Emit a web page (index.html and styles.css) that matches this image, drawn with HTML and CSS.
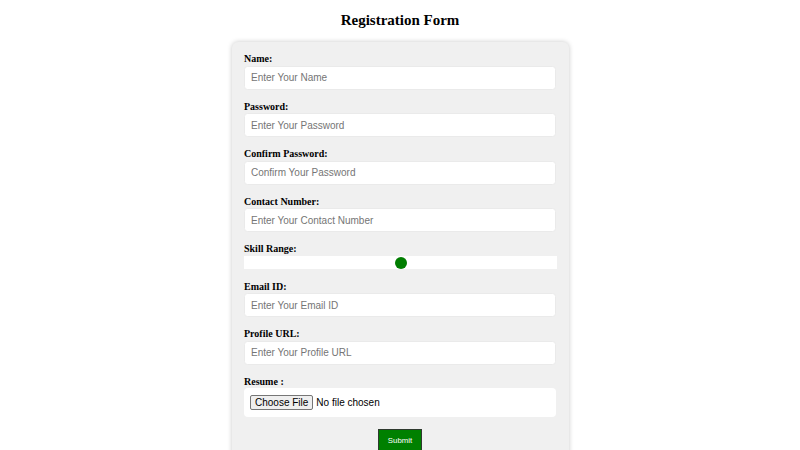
FILE: index.html
```html
<!DOCTYPE html>
<html lang="en">
<head>
<meta charset="utf-8">
<title>Registration Form</title>
<link rel="stylesheet" href="styles.css">
</head>
<body>
<h1 class="title">Registration Form</h1>
<form class="card">
  <label class="lbl" for="name">Name:</label>
  <input class="field" id="name" type="text" placeholder="Enter Your Name">
  <label class="lbl" for="pw">Password:</label>
  <input class="field" id="pw" type="password" placeholder="Enter Your Password">
  <label class="lbl" for="cpw">Confirm Password:</label>
  <input class="field" id="cpw" type="password" placeholder="Confirm Your Password">
  <label class="lbl" for="phone">Contact Number:</label>
  <input class="field" id="phone" type="tel" placeholder="Enter Your Contact Number">
  <label class="lbl" for="skill">Skill Range:</label>
  <input class="range" id="skill" type="range" min="0" max="100" value="50">
  <label class="lbl" for="email">Email ID:</label>
  <input class="field" id="email" type="email" placeholder="Enter Your Email ID">
  <label class="lbl" for="url">Profile URL:</label>
  <input class="field" id="url" type="url" placeholder="Enter Your Profile URL">
  <label class="lbl" for="resume">Resume :</label>
  <input class="file" id="resume" type="file">
  <div class="actions">
    <button class="submit" type="submit">Submit</button>
  </div>
</form>
</body>
</html>
```
FILE: styles.css
```css
html, body {
  margin: 0;
  padding: 0;
  background: #ffffff;
}
body {
  font-family: "Liberation Serif", "Times New Roman", serif;
  color: #000;
}
.title {
  font-size: 15px;
  font-weight: bold;
  line-height: 17px;
  text-align: center;
  margin: 12.4px 0 12.6px;
}
.card {
  width: 337px;
  box-sizing: border-box;
  margin: 0 auto;
  padding: 11.5px 12.5px 20px;
  background: #f0f0f0;
  border-radius: 6px;
  box-shadow: 0 0 5px rgba(0, 0, 0, 0.22);
}
.lbl {
  display: block;
  font-size: 10px;
  font-weight: bold;
  line-height: 11.5px;
  margin-bottom: 0.9px;
}
.field {
  display: block;
  width: 100%;
  height: 24px;
  box-sizing: border-box;
  margin: 0 0 11.1px;
  padding: 0 6px;
  border: 1px solid #eaeaea;
  border-radius: 3.5px;
  background: #fff;
  font-family: "Liberation Sans", Arial, sans-serif;
  font-size: 10px;
  color: #000;
  outline: none;
}
.field::placeholder {
  color: #757575;
}
.range {
  -webkit-appearance: none;
  appearance: none;
  display: block;
  width: calc(100% + 1px);
  height: 13px;
  margin: 1.5px 0 11.5px;
  padding: 0;
  background: #fff;
}
.range::-webkit-slider-runnable-track {
  height: 13px;
  background: #fff;
}
.range::-webkit-slider-thumb {
  -webkit-appearance: none;
  appearance: none;
  width: 12px;
  height: 12px;
  margin-top: 0.5px;
  border-radius: 50%;
  background: #007d00;
  border: none;
}
.file {
  display: block;
  width: 100%;
  box-sizing: border-box;
  margin: 0 0 12px;
  padding: 6.5px 6px;
  border: none;
  border-radius: 4px;
  background: #fff;
  font-family: "Liberation Sans", Arial, sans-serif;
  font-size: 10px;
  line-height: 11.5px;
  color: #000;
}
.file::file-selector-button {
  font-family: "Liberation Sans", Arial, sans-serif;
  font-size: 10px;
  line-height: 11.5px;
  padding: 1px 4px;
  margin: 0 3px 0 0;
  border: 1px solid #767676;
  border-radius: 2px;
  background: #efefef;
  color: #000;
}
.actions {
  display: flex;
  justify-content: center;
}
.submit {
  font-family: "Liberation Sans", Arial, sans-serif;
  font-size: 7.8px;
  line-height: 8.6px;
  padding: 7.5px 8.5px;
  background: #008000;
  color: #fff;
  border: 1px solid #2f3a2f;
  border-radius: 0;
}
```
